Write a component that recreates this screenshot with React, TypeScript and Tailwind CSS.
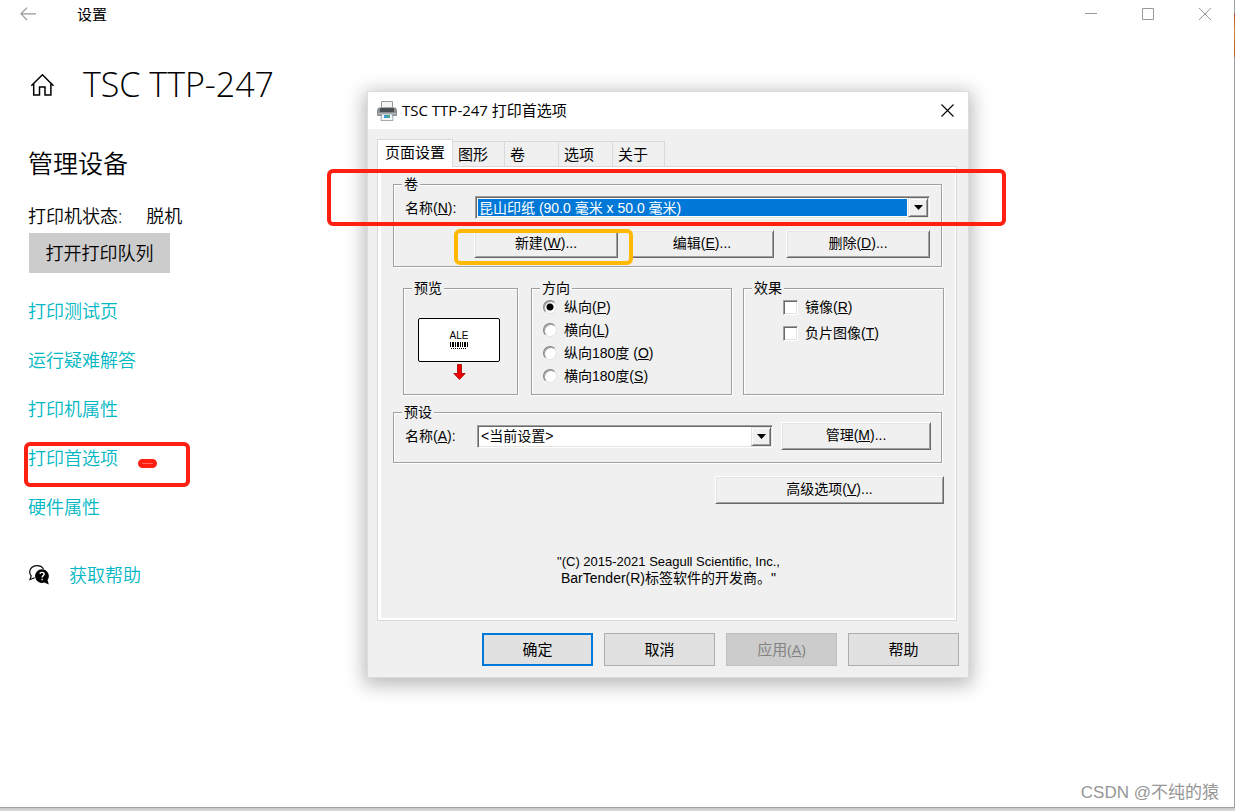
import React from 'react';

const UI_FONT = "font-['Open_Sans','Noto_Sans_CJK_SC',sans-serif]";
const DIALOG_FONT = "font-['Liberation_Sans','Noto_Sans_CJK_SC',sans-serif]";

const LINKS = ['打印测试页', '运行疑难解答', '打印机属性', '打印首选项', '硬件属性'];
const TABS = [
  { label: '图形', width: 'w-[52px]' },
  { label: '卷', width: 'w-[54px]' },
  { label: '选项', width: 'w-[54px]' },
  { label: '关于', width: 'w-[52px]' },
];
const DIRECTIONS = [
  { text: '纵向', hotkey: 'P' },
  { text: '横向', hotkey: 'L' },
  { text: '纵向180度 ', hotkey: 'O' },
  { text: '横向180度', hotkey: 'S' },
];
const EFFECTS = [
  { text: '镜像', hotkey: 'R' },
  { text: '负片图像', hotkey: 'T' },
];

export default function App() {
  return (
    <div className={`relative min-h-screen flex flex-col overflow-hidden bg-[#d0d2d3] text-black ${UI_FONT}`}>
      <div className="flex-1 flex">
        <main className="flex-1 bg-white border-b border-[#a0a0a0]">
          <TitleBar />
          <Sidebar />
        </main>
        {/* sliver of the desktop behind the window */}
        <div className="w-px bg-[linear-gradient(to_bottom,#a0a0a0_13px,#b5482f_14px,#c98a4a_30px,#b9602c_56px,#a0a0a0_58px)]" />
      </div>
      <div className="h-[3px] bg-gradient-to-b from-[#c4c6c7] to-[#dcdcdc]" />

      <PreferencesDialog />

      {/* Marker annotations */}
      <div className="absolute left-[327px] top-[169px] w-[679px] h-[57px] border-4 border-[#ff2012] rounded-md pointer-events-none" />
      <div className="absolute left-[454px] top-[229px] w-[179px] h-9 border-4 border-[#ffb900] rounded-md pointer-events-none" />
      <div className="absolute left-6 top-[442px] w-[166px] h-[45px] border-4 border-[#ff2012] rounded-md pointer-events-none" />
      <div className="absolute left-[138px] top-[459px] w-[19px] h-[9px] border-4 border-[#ff2012] bg-[#ff6a5c] rounded-full pointer-events-none" />

      <p className={`absolute right-4 bottom-1 text-[17px] leading-7 text-[#969696] ${DIALOG_FONT}`}>
        CSDN @不纯的猿
      </p>
    </div>
  );
}

function TitleBar() {
  return (
    <header className="h-7 flex items-center justify-between">
      <div className="flex items-center">
        <button aria-label="返回" className="w-14 h-7 flex items-center justify-center text-[#999]">
          <svg width="16" height="14" viewBox="0 0 16 14" fill="none" stroke="currentColor" strokeWidth="1.2">
            <path d="M7 .6 1 6.8 7 13M1 6.8h15" />
          </svg>
        </button>
        <span className="ml-[21px] text-[15px]">设置</span>
      </div>
      <div className="flex pr-px text-[#999]">
        <button aria-label="最小化" className="w-[57px] h-7 flex items-center justify-center">
          <svg width="12" height="12" viewBox="0 0 12 12" stroke="currentColor"><path d="M0 5.5h12" /></svg>
        </button>
        <button aria-label="最大化" className="w-[57px] h-7 flex items-center justify-center">
          <svg width="12" height="12" viewBox="0 0 12 12" fill="none" stroke="currentColor"><path d="M.5.5h11v11H.5z" /></svg>
        </button>
        <button aria-label="关闭" className="w-[57px] h-7 flex items-center justify-center">
          <svg width="12" height="12" viewBox="0 0 12 12" stroke="currentColor"><path d="m0 0 12 12M12 0 0 12" /></svg>
        </button>
      </div>
    </header>
  );
}

function Sidebar() {
  return (
    <div className="w-[320px] pl-7 pt-8 text-[18px] leading-6 font-[350]">
      <div className="h-12 flex items-center">
        <HomeIcon />
        <h1 className="ml-[29px] text-[34px] leading-[48px] font-light whitespace-nowrap">TSC TTP-247</h1>
      </div>

      <h2 className="mt-[39px] text-[25px] leading-8 font-[350]">管理设备</h2>
      <p className="mt-[25px] flex gap-6">
        <span>打印机状态:</span>
        <span>脱机</span>
      </p>
      <button className="ml-px mt-[5px] w-[141px] h-10 bg-[#ccc]">打开打印队列</button>

      <nav className="mt-[26px] flex flex-col items-start gap-[25px] text-[#00b7c3]">
        {LINKS.map((link) => (
          <a key={link} href="#">{link}</a>
        ))}
      </nav>

      <div className="mt-11 flex items-center gap-5">
        <HelpIcon />
        <a href="#" className="text-[#00b7c3]">获取帮助</a>
      </div>
    </div>
  );
}

function PreferencesDialog() {
  return (
    <section
      role="dialog"
      aria-label="TSC TTP-247 打印首选项"
      className="absolute left-[367px] top-[91px] w-[602px] bg-[#f0f0f0] border border-[#dcdcdc] shadow-[0_4px_18px_3px_rgba(0,0,0,0.28)]"
    >
      <div className="h-[37px] bg-white flex items-center justify-between pl-[9px] pr-[14px]">
        <div className="flex items-center gap-[5px] text-[15px]">
          <PrinterIcon />
          <span>TSC TTP-247 打印首选项</span>
        </div>
        <button aria-label="关闭对话框">
          <svg width="13" height="13" viewBox="0 0 13 13" stroke="#000" strokeWidth="1.1"><path d="m.5.5 12 12M12.500.5l-12 12" /></svg>
        </button>
      </div>

      <div className="pt-[10px] pl-[9px] pr-[11px]">
        {/* Tabs */}
        <div role="tablist" className="flex items-end text-[15px]">
          <button role="tab" aria-selected="true" className="w-[76px] h-7 -mb-px pb-[2px] bg-white border border-b-0 border-[#d9d9d9]">
            页面设置
          </button>
          {TABS.map((tab) => (
            <button
              key={tab.label}
              role="tab"
              aria-selected="false"
              className={`${tab.width} h-[25px] pl-[5px] text-left border-t border-r border-[#d9d9d9]`}
            >
              {tab.label}
            </button>
          ))}
        </div>

        {/* Page setup */}
        <div className={`border border-[#d9d9d9] shadow-[inset_3px_2px_0_#fff,inset_-1px_-2px_0_#fff] pt-[9px] pl-[15px] pr-3 pb-[34px] text-[14px] leading-4 ${DIALOG_FONT}`}>
          <Group title="卷" className="mr-[2px]" bodyClassName="pt-1 pb-2 pl-[11px] pr-[11px]">
            <div className="flex items-center">
              <label htmlFor="stock" className="w-[70px]">名称(<u>N</u>):</label>
              <DropDown id="stock" value="昆山印纸 (90.0 毫米 x 50.0 毫米)" selected />
            </div>
            <div className="mt-[11px] flex justify-end gap-3">
              <ClassicButton text="新建" hotkey="W" className="w-[144px]" />
              <ClassicButton text="编辑" hotkey="E" className="w-[144px]" />
              <ClassicButton text="删除" hotkey="D" className="w-[144px]" />
            </div>
          </Group>

          <div className="mt-[13px] ml-[10px] flex h-[115px]">
            <Group title="预览" className="w-[115px]" bodyClassName="pt-[22px] pr-[3px]">
              <LabelPreview />
            </Group>
            <Group title="方向" className="ml-[13px] flex-1" bodyClassName="pl-[11px] flex flex-col gap-px">
              {DIRECTIONS.map((item, i) => (
                <label key={item.hotkey} className="h-[22px] flex items-center gap-[7px] whitespace-pre">
                  <input
                    type="radio"
                    name="direction"
                    defaultChecked={i === 0}
                    className="appearance-none w-[14px] h-[14px] rounded-full bg-white border border-t-[#808080] border-l-[#808080] border-r-[#e3e3e3] border-b-[#e3e3e3] shadow-[inset_1px_1px_0_#a0a0a0] checked:bg-[radial-gradient(circle,#000_3px,#fff_4px)]"
                  />
                  <span>{item.text}(<u>{item.hotkey}</u>)</span>
                </label>
              ))}
            </Group>
            <Group title="效果" className="ml-[11px] flex-1" bodyClassName="pl-[39px] flex flex-col gap-1">
              {EFFECTS.map((item) => (
                <label key={item.hotkey} className="h-[22px] flex items-center gap-[7px]">
                  <input
                    type="checkbox"
                    className="appearance-none w-[15px] h-[15px] bg-white border border-t-[#a0a0a0] border-l-[#a0a0a0] border-r-white border-b-white shadow-[inset_1px_1px_0_#696969,inset_-1px_-1px_0_#e3e3e3]"
                  />
                  <span>{item.text}(<u>{item.hotkey}</u>)</span>
                </label>
              ))}
            </Group>
          </div>

          <Group title="预设" className="mt-[9px] mr-[2px]" bodyClassName="pt-[2px] pb-3 pl-[11px] pr-[10px]">
            <div className="flex items-center">
              <label htmlFor="preset" className="w-[72px]">名称(<u>A</u>):</label>
              <DropDown id="preset" value="<当前设置>" />
              <ClassicButton text="管理" hotkey="M" className="ml-2 w-[150px]" />
            </div>
          </Group>

          <div className="mt-[13px] flex justify-end">
            <ClassicButton text="高级选项" hotkey="V" className="w-[229px]" />
          </div>

          <div className="mt-[50px] text-center">
            <p className="text-[13px] leading-4">"(C) 2015-2021 Seagull Scientific, Inc.,</p>
            <p>BarTender(R)标签软件的开发商。"</p>
          </div>
        </div>
      </div>

      {/* Dialog buttons */}
      <div className="pt-3 pb-[11px] pr-[9px] flex justify-end gap-[11px] text-[15px]">
        <button className="w-[111px] h-[33px] bg-[#e1e1e1] border-2 border-[#0078d7]">确定</button>
        <button className="w-[111px] h-[33px] bg-[#e1e1e1] border border-[#adadad]">取消</button>
        <button disabled className="w-[111px] h-[33px] bg-[#ccc] border border-[#bfbfbf] text-[#838383]">应用(<u>A</u>)</button>
        <button className="w-[111px] h-[33px] bg-[#e1e1e1] border border-[#adadad]">帮助</button>
      </div>
    </section>
  );
}

function Group({ title, className, bodyClassName, children }: { title: string, className: string, bodyClassName: string, children: React.ReactNode }) {
  return (
    <fieldset className={`min-w-0 border border-[#a0a0a0] shadow-[1px_1px_0_#fff,inset_1px_1px_0_#fff] ${className}`}>
      <legend className="ml-2 px-[2px] bg-[#f0f0f0]">{title}</legend>
      <div className={bodyClassName}>{children}</div>
    </fieldset>
  );
}

function ClassicButton({ text, hotkey, className }: { text: string, hotkey: string, className: string }) {
  return (
    <button className={`h-7 pb-[2px] border border-t-white border-l-white border-r-[#696969] border-b-[#696969] shadow-[inset_1px_1px_0_#e3e3e3,inset_-1px_-1px_0_#a0a0a0] ${className}`}>
      {text}(<u>{hotkey}</u>)...
    </button>
  );
}

function DropDown({ id, value, selected }: { id: string, value: string, selected?: boolean }) {
  return (
    <div className="flex-1 h-[23px] flex p-px bg-white border border-t-[#a0a0a0] border-l-[#a0a0a0] border-r-white border-b-white shadow-[inset_1px_1px_0_#696969,inset_-1px_-1px_0_#e3e3e3]">
      <select
        id={id}
        className={`appearance-none flex-1 min-w-0 m-px pl-px leading-4 outline-none ${selected ? 'bg-[#0078d7] text-white' : 'bg-white'}`}
      >
        <option>{value}</option>
      </select>
      <span className="w-5 flex items-center justify-center bg-[#f0f0f0] border border-t-[#e3e3e3] border-l-[#e3e3e3] border-r-[#696969] border-b-[#696969] shadow-[inset_1px_1px_0_#fff,inset_-1px_-1px_0_#a0a0a0] pointer-events-none">
        <svg width="9" height="5" viewBox="0 0 9 5"><path d="M0 0h9L4.500 5z" /></svg>
      </span>
    </div>
  );
}

function LabelPreview() {
  return (
    <div className="flex flex-col items-center">
      <div className="w-[82px] h-11 bg-white border border-black rounded-[2px] flex flex-col items-center justify-center">
        <span className="text-[10px] leading-3">ALE</span>
        <svg width="18" height="8" viewBox="0 0 18 8" shapeRendering="crispEdges">
          <path d="M0 0h1v5H0zM2 0h2v5H2zM5 0h1v5H5zM7 0h2v5H7zM10 0h1v5h-1zM12 0h1v5h-1zM14 0h2v5h-2zM17 0h1v5h-1z" />
          <path d="M1 6.500h16" stroke="#000" strokeDasharray="1 1" />
        </svg>
      </div>
      <svg className="mt-[2px]" width="13" height="16" viewBox="0 0 13 16" fill="#f00000" stroke="#900" strokeWidth=".8">
        <path d="M4.500.5h4v9h3.700L6.500 15.400.800 9.500h3.700z" />
      </svg>
    </div>
  );
}

function HomeIcon() {
  return (
    <svg className="shrink-0" width="26" height="24" viewBox="-1 0 26 24" fill="none" stroke="#000" strokeWidth="1.500">
      <path d="M2.300 13.800 13.400 2.700l11.100 11.100M4.700 11.600v11.300h5.800v-7.800h5.500v7.800h5.900V11.600" />
    </svg>
  );
}

function HelpIcon() {
  return (
    <svg className="ml-px" width="20" height="20" viewBox="0 0 20 20">
      <path d="M14.500 3.800C12.900 1.600 10.700.7 8 .7 3.700.7.700 3.300.700 6.900c0 1.600.600 2.900 1.500 4L1 14.500l4.700-1.700" fill="none" stroke="#000" strokeWidth="1.200" />
      <path d="M13 4.200a6.900 6.900 0 0 1 5.500 10.900l1.300 4.300-4.500-1.800A6.900 6.900 0 1 1 13 4.200z" />
      <path d="M10.900 8.900c.2-2 4.300-2 4.300.2 0 1.600-2.100 1.500-2.100 3.400M13.100 13.700v1.500" fill="none" stroke="#fff" strokeWidth="1.400" />
    </svg>
  );
}

function PrinterIcon() {
  return (
    <svg width="20" height="20" viewBox="0 0 20 20">
      <path d="M4.500.5h11V7h-11z" fill="#f4f4f4" stroke="#9a9a9a" />
      <path d="M1.500 6.500h17l1.500 2V14q0 1-1 1H1q-1 0-1-1V8.500z" fill="#8b8f92" />
      <path d="M3 7h14v4H3z" fill="#4b4f52" />
      <path d="M1 12h18v1.500H1z" fill="#b9bcbe" />
      <path d="M4.500 13h11l.5 6.500H4z" fill="#f2f7fa" stroke="#8d9599" strokeWidth=".8" />
      <path d="M7 14h3v3H7z" fill="#3b9bd0" />
      <path d="M10 14h3v3h-3z" fill="#4aa58a" />
    </svg>
  );
}
